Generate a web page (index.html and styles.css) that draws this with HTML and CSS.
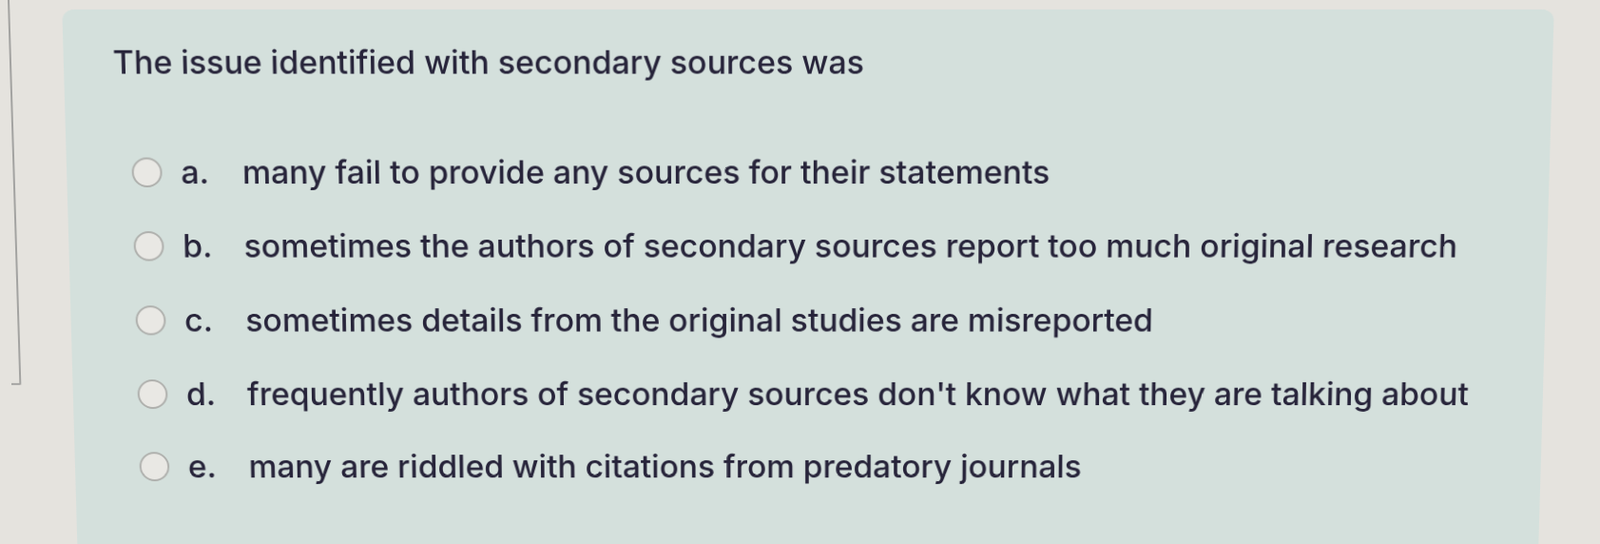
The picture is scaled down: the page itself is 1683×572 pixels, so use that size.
FILE: index.html
```html
<!DOCTYPE html>
<html lang="en">
<head>
<meta charset="utf-8">
<title>Question</title>
<link rel="stylesheet" href="styles.css">
</head>
<body>
<div class="page">
  <div class="side-panel"></div>
  <div class="card">
    <div class="question">The issue identified with secondary sources was</div>
    <div class="answers">
      <div class="answer"><span class="radio"></span><span class="letter">a.</span><span class="text">many fail to provide any sources for their statements</span></div>
      <div class="answer"><span class="radio"></span><span class="letter">b.</span><span class="text">sometimes the authors of secondary sources report too much original research</span></div>
      <div class="answer"><span class="radio"></span><span class="letter">c.</span><span class="text">sometimes details from the original studies are misreported</span></div>
      <div class="answer"><span class="radio"></span><span class="letter">d.</span><span class="text">frequently authors of secondary sources don't know what they are talking about</span></div>
      <div class="answer"><span class="radio"></span><span class="letter">e.</span><span class="text">many are riddled with citations from predatory journals</span></div>
    </div>
  </div>
</div>
</body>
</html>
```
FILE: styles.css
```css
html, body {
  margin: 0;
  padding: 0;
  height: 100%;
  overflow: hidden;
  background: #e5e3de;
}

/* the reference is a photo of a screen, slightly tilted away at the bottom */
.page {
  display: flex;
  align-items: flex-start;
  width: 1683px;
  font-family: Inter, "Liberation Sans", Arial, sans-serif;
  color: #27243a;
  transform-origin: 50% 0;
  transform: perspective(2000px) rotateX(-4.2deg);
}

.side-panel {
  flex: 0 0 auto;
  width: 8px;
  height: 410px;
  border-right: 2px solid #a3a3a1;
  border-bottom: 2px solid #a3a3a1;
  border-bottom-right-radius: 2px;
}

.card {
  flex: 0 0 auto;
  margin-left: 55px;
  margin-top: 10px;
  width: 1570px;
  height: 620px;
  box-sizing: border-box;
  padding: 36px 0 0 52px;
  background: #d4e0dc;
  border-radius: 12px;
}

.question {
  font-size: 34px;
  font-weight: 500;
  line-height: 40px;
}

.answers {
  margin-top: 76.6px;
  padding-left: 17px;
  display: flex;
  flex-direction: column;
  gap: 39.7px;
}

.answer {
  display: flex;
  align-items: center;
  font-size: 34.1px;
  font-weight: 500;
  line-height: 40px;
}

.radio {
  flex: 0 0 auto;
  width: 28px;
  height: 28px;
  border: 2px solid #aeafac;
  border-radius: 50%;
  background: #e9e8e4;
  margin-right: 20px;
}

.letter {
  flex: 0 0 auto;
  width: 65px;
}

.text {
  white-space: nowrap;
}
```
